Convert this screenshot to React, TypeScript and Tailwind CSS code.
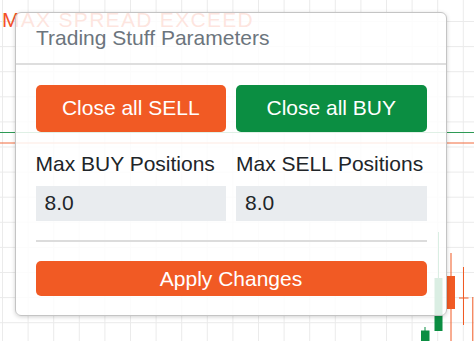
import React from "react";

export default function App() {
  const vx = Array.from({ length: 19 }, (_, i) => 2.5 + i * 25.6);
  const hy = Array.from({ length: 14 }, (_, i) => 21.5 + i * 25.1);
  return (
    <div className="relative w-[474px] h-[341px] overflow-hidden bg-white font-['Liberation_Sans',Arial,sans-serif]">
      <svg className="absolute inset-0" width="474" height="341" viewBox="0 0 474 341">
        {vx.map((x) => (
          <line key={"v" + x} x1={x} y1={0} x2={x} y2={341} stroke="#ebebeb" strokeWidth="1" />
        ))}
        {hy.map((y) => (
          <line key={"h" + y} x1={0} y1={y} x2={474} y2={y} stroke="#ebebeb" strokeWidth="1" />
        ))}
        <line x1={0} y1={132.5} x2={474} y2={132.5} stroke="#2e9a55" strokeWidth="1" />
        <line x1={0} y1={143} x2={474} y2={143} stroke="#f26b3d" strokeWidth="1" />
        {/* green candles */}
        <line x1={438.5} y1={232} x2={438.5} y2={278} stroke="#0b8e42" strokeWidth="1" />
        <rect x={434.5} y={278} width={8} height={53} fill="#0b8e42" />
        <line x1={425} y1={327} x2={425} y2={331} stroke="#0b8e42" strokeWidth="1" />
        <rect x={421} y={330.5} width={8.5} height={11} fill="#0b8e42" />
        {/* orange candles */}
        <line x1={451} y1={253} x2={451} y2={341} stroke="#f15a24" strokeWidth="1" />
        <rect x={446.8} y={276} width={8.2} height={33} fill="#f15a24" />
        <line x1={463.5} y1={267} x2={463.5} y2={325} stroke="#f15a24" strokeWidth="1" />
        <line x1={459} y1={298} x2={468.5} y2={298} stroke="#f15a24" strokeWidth="1" />
        <line x1={472.8} y1={297} x2={472.8} y2={341} stroke="#f15a24" strokeWidth="1" />
      </svg>

      <div className="absolute left-[2px] top-[9px] text-[21px] leading-none tracking-[1.3px] text-[#f4512a] whitespace-nowrap">
        MAX SPREAD EXCEED
      </div>

      <div className="absolute left-[15px] top-[11.5px] w-[432px] rounded-[6px] border-[1.5px] border-[#c4c4c4] bg-white/85 shadow-[0_1px_4px_rgba(0,0,0,0.18)]">
        <div className="border-b-2 border-[#dedede] px-[20px] pt-[13px] pb-[13px] text-[21px] leading-[24px] text-[#6c757d]">
          Trading Stuff Parameters
        </div>
        <div className="px-[19.5px] pt-[20px] pb-[18.5px]">
          <div className="flex gap-[10px]">
            <button className="flex h-[47px] flex-1 items-center justify-center rounded-[5px] bg-[#f15a24] text-[21px] leading-[24px] text-white">
              Close all SELL
            </button>
            <button className="flex h-[47px] flex-1 items-center justify-center rounded-[5px] bg-[#0b8e42] text-[21px] leading-[24px] text-white">
              Close all BUY
            </button>
          </div>
          <div className="mt-[20px] grid grid-cols-2 gap-x-[10px]">
            <div>
              <div className="text-[21px] leading-[24px] text-[#212529] whitespace-nowrap">Max BUY Positions</div>
              <input
                readOnly
                value="8.0"
                className="mt-[10px] block h-[35px] w-full bg-[#e9ecef] px-[9px] text-[21px] leading-[24px] text-[#212529] outline-none"
              />
            </div>
            <div>
              <div className="text-[21px] leading-[24px] text-[#212529] whitespace-nowrap">Max SELL Positions</div>
              <input
                readOnly
                value="8.0"
                className="mt-[10px] block h-[35px] w-full bg-[#e9ecef] px-[9px] text-[21px] leading-[24px] text-[#212529] outline-none"
              />
            </div>
          </div>
          <div className="mt-[19.5px] h-[2px] bg-[#dcdcdc]" />
          <button className="mt-[19px] flex h-[35px] w-full items-center justify-center rounded-[5px] bg-[#f15a24] text-[21px] leading-[24px] text-white">
            Apply Changes
          </button>
        </div>
      </div>
    </div>
  );
}
